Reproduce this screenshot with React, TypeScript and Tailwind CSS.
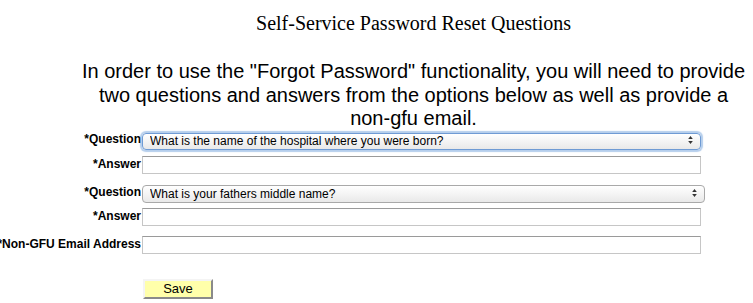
import React from 'react'

const questions1 = ['What is the name of the hospital where you were born?']
const questions2 = ['What is your fathers middle name?']

function Arrows() {
  return (
    <svg width="5" height="9" viewBox="0 0 5 9" className="absolute top-1/2 -translate-y-1/2 right-[8px] pointer-events-none">
      <path d="M2.5 0.5 L4.8 3.5 L0.2 3.5 Z" fill="#333" />
      <path d="M2.5 8.5 L4.8 5.5 L0.2 5.5 Z" fill="#333" />
    </svg>
  )
}

function Select({ options, focused, width }: { options: string[]; focused?: boolean; width: string }) {
  return (
    <div className={`relative ${width}`}>
      <select
        defaultValue={options[0]}
        className={
          focused
            ? 'appearance-none w-full h-[17px] rounded-[4px] border border-[#6f9bd4] shadow-[0_0_1px_2px_rgba(120,165,220,0.55)] bg-gradient-to-b from-white to-[#e9e9e9] pl-[7px] text-[12px] leading-[15px] text-black outline-none'
            : 'appearance-none w-full h-[18px] rounded-[4px] border border-[#a9a9a9] bg-gradient-to-b from-white to-[#e9e9e9] pl-[7px] text-[12px] leading-[16px] text-black outline-none'
        }
        style={{ fontFamily: '"Liberation Sans", Arial, sans-serif' }}
      >
        {options.map((o) => (
          <option key={o}>{o}</option>
        ))}
      </select>
      <Arrows />
    </div>
  )
}

function TextInput() {
  return (
    <input
      type="text"
      className="w-[559px] h-[18px] border border-[#c6c6c6] border-t-[#9a9a9a] bg-white outline-none text-[12px] px-1"
    />
  )
}

function Label({ children }: { children: React.ReactNode }) {
  return (
    <div className="w-[142px] shrink-0 flex justify-end pr-[1px] pb-[2px]">
      <span className="whitespace-nowrap text-[12px] font-bold text-black">{children}</span>
    </div>
  )
}

export default function App() {
  return (
    <div
      className="w-[753px] h-[303px] overflow-hidden bg-white text-black"
      style={{ fontFamily: '"Liberation Sans", Arial, sans-serif' }}
    >
      <div className="pl-[74px] text-center">
        <h1
          className="pt-[12px] text-[20px] leading-[23px] font-normal"
          style={{ fontFamily: '"Liberation Serif", "Times New Roman", serif' }}
        >
          Self-Service Password Reset Questions
        </h1>
        <p className="mt-[25px] text-[20px] leading-[23.5px]">
          In order to use the "Forgot Password" functionality, you will need to provide two questions and
          answers from the options below as well as provide a <span className="whitespace-nowrap">non-gfu</span> email.
        </p>
      </div>

      <form className="mt-[1px] flex flex-col" onSubmit={(e) => e.preventDefault()}>
        <div className="flex items-center h-[17px]">
          <Label>*Question</Label>
          <Select options={questions1} focused width="w-[559px]" />
        </div>
        <div className="mt-[7px] flex items-center h-[18px]">
          <Label>*Answer</Label>
          <TextInput />
        </div>
        <div className="mt-[10px] flex items-center h-[18px]">
          <Label>*Question</Label>
          <Select options={questions2} width="w-[563px]" />
        </div>
        <div className="mt-[6px] flex items-center h-[19px]">
          <Label>*Answer</Label>
          <TextInput />
        </div>
        <div className="mt-[9px] flex items-center h-[18px]">
          <Label>*Non-GFU Email Address</Label>
          <TextInput />
        </div>
        <div className="mt-[22px] pl-[143px]">
          <button
            type="submit"
            className="w-[70px] h-[20px] bg-[#ffffaa] border-2 border-t-[#f4f4f4] border-l-[#f4f4f4] border-r-[#8a8a8a] border-b-[#8a8a8a] text-[13px] leading-[16px] text-black"
          >
            Save
          </button>
        </div>
      </form>
    </div>
  )
}
